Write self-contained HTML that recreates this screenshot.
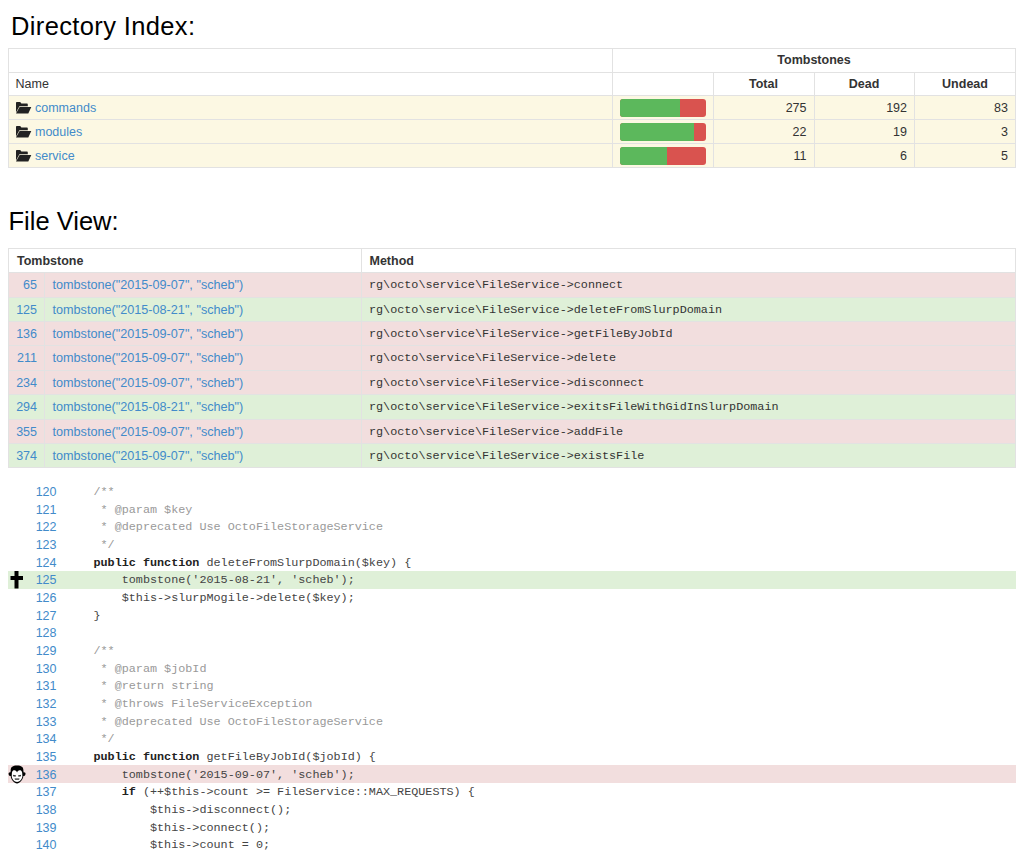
<!DOCTYPE html>
<html><head><meta charset="utf-8"><style>
*{margin:0;padding:0;box-sizing:border-box}
html,body{width:1024px;height:853px;overflow:hidden;background:#fff}
body{position:relative;font-family:"Liberation Sans",sans-serif;color:#333;font-size:12.5px}
.abs{position:absolute}
h1{position:absolute;font-weight:normal;font-size:25.5px;color:#000;left:11px;line-height:30px;white-space:nowrap}
.hl{position:absolute;background:#e2e2e2}
.txt{position:absolute;white-space:nowrap;line-height:15px}
.b{font-weight:bold}
.lnk{color:#428bca}
.mono{font-family:"Liberation Mono",monospace}

.code{position:absolute;left:93.5px;white-space:pre;font-family:"Liberation Mono",monospace;font-size:11.78px;line-height:15px;color:#444}
.cm{color:#999}
.kw{font-weight:bold;color:#222}
</style></head>
<body>
<h1 style="top:11px;letter-spacing:0.36px">Directory Index:</h1><h1 style="top:206px;left:8.5px">File View:</h1><div class="abs" style="left:8px;top:95px;width:1008px;height:72px;background:#fcf8e3;"></div><div class="hl" style="left:8px;top:48px;width:1008px;height:1px"></div><div class="hl" style="left:8px;top:72px;width:1008px;height:1px"></div><div class="hl" style="left:8px;top:95px;width:1008px;height:1px"></div><div class="hl" style="left:8px;top:119px;width:1008px;height:1px"></div><div class="hl" style="left:8px;top:143px;width:1008px;height:1px"></div><div class="hl" style="left:8px;top:167px;width:1008px;height:1px"></div><div class="hl" style="left:8px;top:48px;width:1px;height:120px"></div><div class="hl" style="left:1015px;top:48px;width:1px;height:120px"></div><div class="hl" style="left:612px;top:48px;width:1px;height:120px"></div><div class="hl" style="left:713px;top:72px;width:1px;height:96px"></div><div class="hl" style="left:814px;top:72px;width:1px;height:96px"></div><div class="hl" style="left:914px;top:72px;width:1px;height:96px"></div><div class="txt b" style="left:614px;width:400px;text-align:center;top:52.900000000000006px;">Tombstones</div><div class="txt " style="left:15.5px;top:76.7px;">Name</div><div class="txt b" style="left:563.5px;width:400px;text-align:center;top:76.7px;">Total</div><div class="txt b" style="left:664px;width:400px;text-align:center;top:76.7px;">Dead</div><div class="txt b" style="left:765px;width:400px;text-align:center;top:76.7px;">Undead</div><svg class="abs" style="left:16px;top:102px" width="16" height="12" viewBox="0 0 16 12"><path d="M0 0.8 Q0 0 0.8 0 H4.2 L5.4 1.6 H11 Q11.8 1.6 11.8 2.4 V4.2 H3.4 L0 10.6 Z M3.6 4.9 H15.3 L12.3 11.4 H0 Z" fill="#222"/></svg><div class="txt lnk" style="left:35px;top:100.8px;">commands</div><div class="txt " style="right:217.5px;top:100.8px;">275</div><div class="txt " style="right:117px;top:100.8px;">192</div><div class="txt " style="right:16px;top:100.8px;">83</div><div class="abs" style="left:620px;top:99px;width:85.6px;height:17.5px;border-radius:3px;overflow:hidden;background:#d9534f"><div style="width:60.0px;height:17.5px;background:#5cb85c"></div></div><svg class="abs" style="left:16px;top:126px" width="16" height="12" viewBox="0 0 16 12"><path d="M0 0.8 Q0 0 0.8 0 H4.2 L5.4 1.6 H11 Q11.8 1.6 11.8 2.4 V4.2 H3.4 L0 10.6 Z M3.6 4.9 H15.3 L12.3 11.4 H0 Z" fill="#222"/></svg><div class="txt lnk" style="left:35px;top:124.80000000000001px;">modules</div><div class="txt " style="right:217.5px;top:124.80000000000001px;">22</div><div class="txt " style="right:117px;top:124.80000000000001px;">19</div><div class="txt " style="right:16px;top:124.80000000000001px;">3</div><div class="abs" style="left:620px;top:123px;width:85.6px;height:17.5px;border-radius:3px;overflow:hidden;background:#d9534f"><div style="width:74.3px;height:17.5px;background:#5cb85c"></div></div><svg class="abs" style="left:16px;top:150px" width="16" height="12" viewBox="0 0 16 12"><path d="M0 0.8 Q0 0 0.8 0 H4.2 L5.4 1.6 H11 Q11.8 1.6 11.8 2.4 V4.2 H3.4 L0 10.6 Z M3.6 4.9 H15.3 L12.3 11.4 H0 Z" fill="#222"/></svg><div class="txt lnk" style="left:35px;top:148.8px;">service</div><div class="txt " style="right:217.5px;top:148.8px;">11</div><div class="txt " style="right:117px;top:148.8px;">6</div><div class="txt " style="right:16px;top:148.8px;">5</div><div class="abs" style="left:620px;top:147px;width:85.6px;height:17.5px;border-radius:3px;overflow:hidden;background:#d9534f"><div style="width:46.9px;height:17.5px;background:#5cb85c"></div></div><div class="abs" style="left:8px;top:272px;width:1008px;height:25px;background:#f2dede;"></div><div class="abs" style="left:8px;top:297px;width:1008px;height:24px;background:#dff0d8;"></div><div class="abs" style="left:8px;top:321px;width:1008px;height:24px;background:#f2dede;"></div><div class="abs" style="left:8px;top:345px;width:1008px;height:25px;background:#f2dede;"></div><div class="abs" style="left:8px;top:370px;width:1008px;height:24px;background:#f2dede;"></div><div class="abs" style="left:8px;top:394px;width:1008px;height:25px;background:#dff0d8;"></div><div class="abs" style="left:8px;top:419px;width:1008px;height:24px;background:#f2dede;"></div><div class="abs" style="left:8px;top:443px;width:1008px;height:24px;background:#dff0d8;"></div><div class="hl" style="left:8px;top:272px;width:1008px;height:1px"></div><div class="hl" style="left:8px;top:297px;width:1008px;height:1px"></div><div class="hl" style="left:8px;top:321px;width:1008px;height:1px"></div><div class="hl" style="left:8px;top:345px;width:1008px;height:1px"></div><div class="hl" style="left:8px;top:370px;width:1008px;height:1px"></div><div class="hl" style="left:8px;top:394px;width:1008px;height:1px"></div><div class="hl" style="left:8px;top:419px;width:1008px;height:1px"></div><div class="hl" style="left:8px;top:443px;width:1008px;height:1px"></div><div class="hl" style="left:8px;top:467px;width:1008px;height:1px"></div><div class="hl" style="left:8px;top:248px;width:1008px;height:1px"></div><div class="hl" style="left:8px;top:248px;width:1px;height:219.5px"></div><div class="hl" style="left:1015px;top:248px;width:1px;height:219.5px"></div><div class="hl" style="left:361px;top:248px;width:1px;height:219.5px"></div><div class="hl" style="left:44px;top:272px;width:1px;height:195.5px"></div><div class="txt b" style="left:17px;top:254.2px;">Tombstone</div><div class="txt b" style="left:369.5px;top:254.2px;">Method</div><div class="txt lnk" style="right:987px;top:277.7px;">65</div><div class="txt lnk" style="left:52.5px;top:277.7px;font-size:12.65px">tombstone("2015-09-07", "scheb")</div><div class="txt mono" style="left:369px;top:277.7px;font-size:11.77px;color:#333">rg\octo\service\FileService-&gt;connect</div><div class="txt lnk" style="right:987px;top:302.7px;">125</div><div class="txt lnk" style="left:52.5px;top:302.7px;font-size:12.65px">tombstone("2015-08-21", "scheb")</div><div class="txt mono" style="left:369px;top:302.7px;font-size:11.77px;color:#333">rg\octo\service\FileService-&gt;deleteFromSlurpDomain</div><div class="txt lnk" style="right:987px;top:326.7px;">136</div><div class="txt lnk" style="left:52.5px;top:326.7px;font-size:12.65px">tombstone("2015-09-07", "scheb")</div><div class="txt mono" style="left:369px;top:326.7px;font-size:11.77px;color:#333">rg\octo\service\FileService-&gt;getFileByJobId</div><div class="txt lnk" style="right:987px;top:350.7px;">211</div><div class="txt lnk" style="left:52.5px;top:350.7px;font-size:12.65px">tombstone("2015-09-07", "scheb")</div><div class="txt mono" style="left:369px;top:350.7px;font-size:11.77px;color:#333">rg\octo\service\FileService-&gt;delete</div><div class="txt lnk" style="right:987px;top:375.7px;">234</div><div class="txt lnk" style="left:52.5px;top:375.7px;font-size:12.65px">tombstone("2015-09-07", "scheb")</div><div class="txt mono" style="left:369px;top:375.7px;font-size:11.77px;color:#333">rg\octo\service\FileService-&gt;disconnect</div><div class="txt lnk" style="right:987px;top:399.7px;">294</div><div class="txt lnk" style="left:52.5px;top:399.7px;font-size:12.65px">tombstone("2015-08-21", "scheb")</div><div class="txt mono" style="left:369px;top:399.7px;font-size:11.77px;color:#333">rg\octo\service\FileService-&gt;exitsFileWithGidInSlurpDomain</div><div class="txt lnk" style="right:987px;top:424.7px;">355</div><div class="txt lnk" style="left:52.5px;top:424.7px;font-size:12.65px">tombstone("2015-09-07", "scheb")</div><div class="txt mono" style="left:369px;top:424.7px;font-size:11.77px;color:#333">rg\octo\service\FileService-&gt;addFile</div><div class="txt lnk" style="right:987px;top:448.7px;">374</div><div class="txt lnk" style="left:52.5px;top:448.7px;font-size:12.65px">tombstone("2015-09-07", "scheb")</div><div class="txt mono" style="left:369px;top:448.7px;font-size:11.77px;color:#333">rg\octo\service\FileService-&gt;existsFile</div><div class="abs" style="left:8px;top:570.95px;width:1008px;height:17.67px;background:#dff0d8;"></div><div class="abs" style="left:8px;top:765.32px;width:1008px;height:17.67px;background:#f2dede;"></div><div class="txt lnk" style="right:967.5px;top:485.0px;">120</div><div class="code" style="top:485.0px"><span class="cm">/**</span></div><div class="txt lnk" style="right:967.5px;top:502.66999999999996px;">121</div><div class="code" style="top:502.66999999999996px"><span class="cm"> * @param $key</span></div><div class="txt lnk" style="right:967.5px;top:520.34px;">122</div><div class="code" style="top:520.34px"><span class="cm"> * @deprecated Use OctoFileStorageService</span></div><div class="txt lnk" style="right:967.5px;top:538.01px;">123</div><div class="code" style="top:538.01px"><span class="cm"> */</span></div><div class="txt lnk" style="right:967.5px;top:555.6800000000001px;">124</div><div class="code" style="top:555.6800000000001px"><span class="kw">public function</span> deleteFromSlurpDomain($key) {</div><div class="txt lnk" style="right:967.5px;top:573.35px;">125</div><div class="code" style="top:573.35px">    tombstone('2015-08-21', 'scheb');</div><div class="txt lnk" style="right:967.5px;top:591.02px;">126</div><div class="code" style="top:591.02px">    $this-&gt;slurpMogile-&gt;delete($key);</div><div class="txt lnk" style="right:967.5px;top:608.69px;">127</div><div class="code" style="top:608.69px">}</div><div class="txt lnk" style="right:967.5px;top:626.36px;">128</div><div class="code" style="top:626.36px"></div><div class="txt lnk" style="right:967.5px;top:644.03px;">129</div><div class="code" style="top:644.03px"><span class="cm">/**</span></div><div class="txt lnk" style="right:967.5px;top:661.7px;">130</div><div class="code" style="top:661.7px"><span class="cm"> * @param $jobId</span></div><div class="txt lnk" style="right:967.5px;top:679.37px;">131</div><div class="code" style="top:679.37px"><span class="cm"> * @return string</span></div><div class="txt lnk" style="right:967.5px;top:697.04px;">132</div><div class="code" style="top:697.04px"><span class="cm"> * @throws FileServiceException</span></div><div class="txt lnk" style="right:967.5px;top:714.71px;">133</div><div class="code" style="top:714.71px"><span class="cm"> * @deprecated Use OctoFileStorageService</span></div><div class="txt lnk" style="right:967.5px;top:732.38px;">134</div><div class="code" style="top:732.38px"><span class="cm"> */</span></div><div class="txt lnk" style="right:967.5px;top:750.05px;">135</div><div class="code" style="top:750.05px"><span class="kw">public function</span> getFileByJobId($jobId) {</div><div class="txt lnk" style="right:967.5px;top:767.72px;">136</div><div class="code" style="top:767.72px">    tombstone('2015-09-07', 'scheb');</div><div class="txt lnk" style="right:967.5px;top:785.3900000000001px;">137</div><div class="code" style="top:785.3900000000001px">    <span class="kw">if</span> (++$this-&gt;count &gt;= FileService::MAX_REQUESTS) {</div><div class="txt lnk" style="right:967.5px;top:803.0600000000001px;">138</div><div class="code" style="top:803.0600000000001px">        $this-&gt;disconnect();</div><div class="txt lnk" style="right:967.5px;top:820.73px;">139</div><div class="code" style="top:820.73px">        $this-&gt;connect();</div><div class="txt lnk" style="right:967.5px;top:838.4000000000001px;">140</div><div class="code" style="top:838.4000000000001px">        $this-&gt;count = 0;</div><svg class="abs" style="left:10px;top:570.95px" width="14" height="18" viewBox="0 0 14 18"><rect x="4.5" y="0" width="4" height="17.5" fill="#000"/><rect x="0.5" y="5" width="12.5" height="4" fill="#000"/></svg><svg class="abs" style="left:7.9px;top:765.0200000000001px" width="18.5" height="18.5" viewBox="0 0 18 18"><path d="M8.8 0.6 C13 0.6 15 2 15 5.5 L15.2 7.2 C16.5 7 17.3 7.8 17 9 C16.6 10.5 15.8 10.8 15 10.8 C14.5 14.5 11.5 17.9 8.8 17.9 C6 17.9 3 14.5 2.6 10.8 C1.8 10.8 0.9 10.5 0.6 9 C0.4 7.8 1.2 7 2.4 7.2 L2.6 5.5 C2.6 2 4.6 0.6 8.8 0.6 Z" fill="#000"/><path d="M3.8 7.5 C4.2 5.5 5.5 5 6.5 5.2 C7.5 5.4 8.3 6 8.8 7.2 C9.3 6 10.1 5.4 11.1 5.2 C12.1 5 13.4 5.5 13.8 7.5 L14 11 C13.6 14 11.3 16.5 8.8 16.5 C6.3 16.5 4 14 3.6 11 Z" fill="#fff"/><path d="M4.8 9.6 L7.9 10.2 L7.6 11.3 L5.3 11.1 Z M12.8 9.6 L9.7 10.2 L10 11.3 L12.3 11.1 Z" fill="#222"/><path d="M6.4 13 H11.2 L10.8 14.7 H6.8 Z" fill="#666"/></svg>
</body></html>
